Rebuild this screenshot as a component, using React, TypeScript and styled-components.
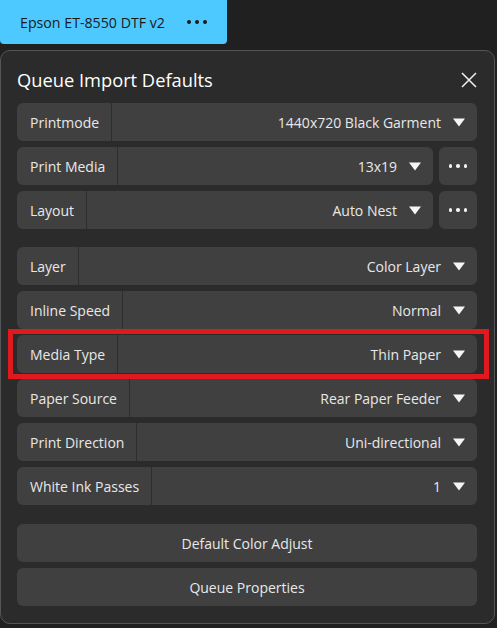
import React from "react";
import styled, { createGlobalStyle } from "styled-components";

const GlobalStyle = createGlobalStyle`
  html, body {
    margin: 0;
    padding: 0;
    background: #202020;
  }
  body {
    font-family: "Open Sans", "Noto Sans", sans-serif;
    -webkit-font-smoothing: antialiased;
  }
`;

const Page = styled.div`
  width: 497px;
  height: 628px;
  background: #202020;
  display: flex;
  flex-direction: column;
  overflow: hidden;
`;

const TabBar = styled.div`
  height: 50px;
  display: flex;
  align-items: flex-start;
`;

const Tab = styled.div`
  width: 227px;
  height: 44px;
  box-sizing: border-box;
  padding: 0 20px 0 20px;
  background: #4dc9ff;
  border-radius: 0 0 4px 4px;
  display: flex;
  align-items: center;
  justify-content: space-between;
  color: #1a1a1a;
  font-size: 14.2px;
`;

const TabDots = styled.span`
  display: flex;
  gap: 4px;
  span {
    width: 4px;
    height: 4px;
    border-radius: 50%;
    background: #1a1a1a;
  }
`;

const Panel = styled.section`
  width: 495px;
  height: 574px;
  box-sizing: border-box;
  background: #2b2b2b;
  border: 1px solid #555;
  border-radius: 10px;
  padding: 0 17px 0 16px;
  display: flex;
  flex-direction: column;
`;

const Header = styled.header`
  height: 52px;
  display: flex;
  align-items: center;
  justify-content: space-between;
`;

const Title = styled.h1`
  margin: 0;
  padding-top: 5px;
  font-size: 18.3px;
  font-weight: 400;
  color: #fff;
`;

const CloseButton = styled.button`
  width: 20px;
  height: 20px;
  margin-right: -2px;
  margin-top: 6px;
  padding: 0;
  border: 0;
  background: none;
  display: flex;
  align-items: center;
  justify-content: center;
`;

const Group = styled.div<{ $gapAfter?: number }>`
  display: flex;
  flex-direction: column;
  gap: 6px;
  margin-bottom: ${({ $gapAfter }) => $gapAfter ?? 0}px;
`;

const Row = styled.div`
  position: relative;
  display: flex;
  gap: 6px;
  height: 38px;
`;

const Select = styled.div`
  flex: 1;
  display: flex;
  align-items: stretch;
  background: #404040;
  border-radius: 6px;
  color: #e8e8e8;
  font-size: 14px;
`;

const Label = styled.div`
  display: flex;
  align-items: center;
  padding: 0 12px 0 13px;
  border-right: 1px solid #2e2e2e;
  white-space: nowrap;
`;

const Value = styled.div`
  flex: 1;
  display: flex;
  align-items: center;
  justify-content: flex-end;
  gap: 12px;
  padding-right: 12px;
  white-space: nowrap;
`;

const MoreButton = styled.button`
  width: 38px;
  padding: 0;
  border: 0;
  background: #404040;
  border-radius: 6px;
  display: flex;
  align-items: center;
  justify-content: center;
  gap: 4px;
  span {
    width: 3.5px;
    height: 3.5px;
    border-radius: 50%;
    background: #f2f2f2;
  }
`;

const Highlight = styled.div`
  position: absolute;
  top: -6px;
  bottom: -6px;
  left: -9px;
  right: -12px;
  border: 5px solid #e0191f;
  pointer-events: none;
`;

const ActionButton = styled.button`
  height: 38px;
  border: 0;
  border-radius: 6px;
  background: #404040;
  color: #e8e8e8;
  font-family: inherit;
  font-size: 14px;
`;

const Caret = () => (
  <svg width="12" height="9" viewBox="0 0 12 9">
    <polygon points="0,0.5 12,0.5 6,8.5" fill="#f5f5f5" />
  </svg>
);

const Dots = () => (
  <>
    <span />
    <span />
    <span />
  </>
);

type Option = { label: string; value: string; more?: boolean; marked?: boolean };

const mediaRows: Option[] = [
  { label: "Printmode", value: "1440x720 Black Garment" },
  { label: "Print Media", value: "13x19", more: true },
  { label: "Layout", value: "Auto Nest", more: true }
];

const settingRows: Option[] = [
  { label: "Layer", value: "Color Layer" },
  { label: "Inline Speed", value: "Normal" },
  { label: "Media Type", value: "Thin Paper", marked: true },
  { label: "Paper Source", value: "Rear Paper Feeder" },
  { label: "Print Direction", value: "Uni-directional" },
  { label: "White Ink Passes", value: "1" }
];

const OptionRow = ({ label, value, more, marked }: Option) => (
  <Row>
    <Select>
      <Label>{label}</Label>
      <Value>
        {value}
        <Caret />
      </Value>
    </Select>
    {more && (
      <MoreButton>
        <Dots />
      </MoreButton>
    )}
    {marked && <Highlight />}
  </Row>
);

export default function App() {
  return (
    <Page>
      <GlobalStyle />
      <TabBar>
        <Tab>
          Epson ET-8550 DTF v2
          <TabDots>
            <Dots />
          </TabDots>
        </Tab>
      </TabBar>
      <Panel>
        <Header>
          <Title>Queue Import Defaults</Title>
          <CloseButton aria-label="Close">
            <svg width="16" height="16" viewBox="0 0 16 16">
              <path d="M1 1 L15 15 M15 1 L1 15" stroke="#f0f0f0" strokeWidth="1.5" />
            </svg>
          </CloseButton>
        </Header>
        <Group $gapAfter={18}>
          {mediaRows.map((r) => (
            <OptionRow key={r.label} {...r} />
          ))}
        </Group>
        <Group $gapAfter={19}>
          {settingRows.map((r) => (
            <OptionRow key={r.label} {...r} />
          ))}
        </Group>
        <Group>
          <ActionButton>Default Color Adjust</ActionButton>
          <ActionButton>Queue Properties</ActionButton>
        </Group>
      </Panel>
    </Page>
  );
}
